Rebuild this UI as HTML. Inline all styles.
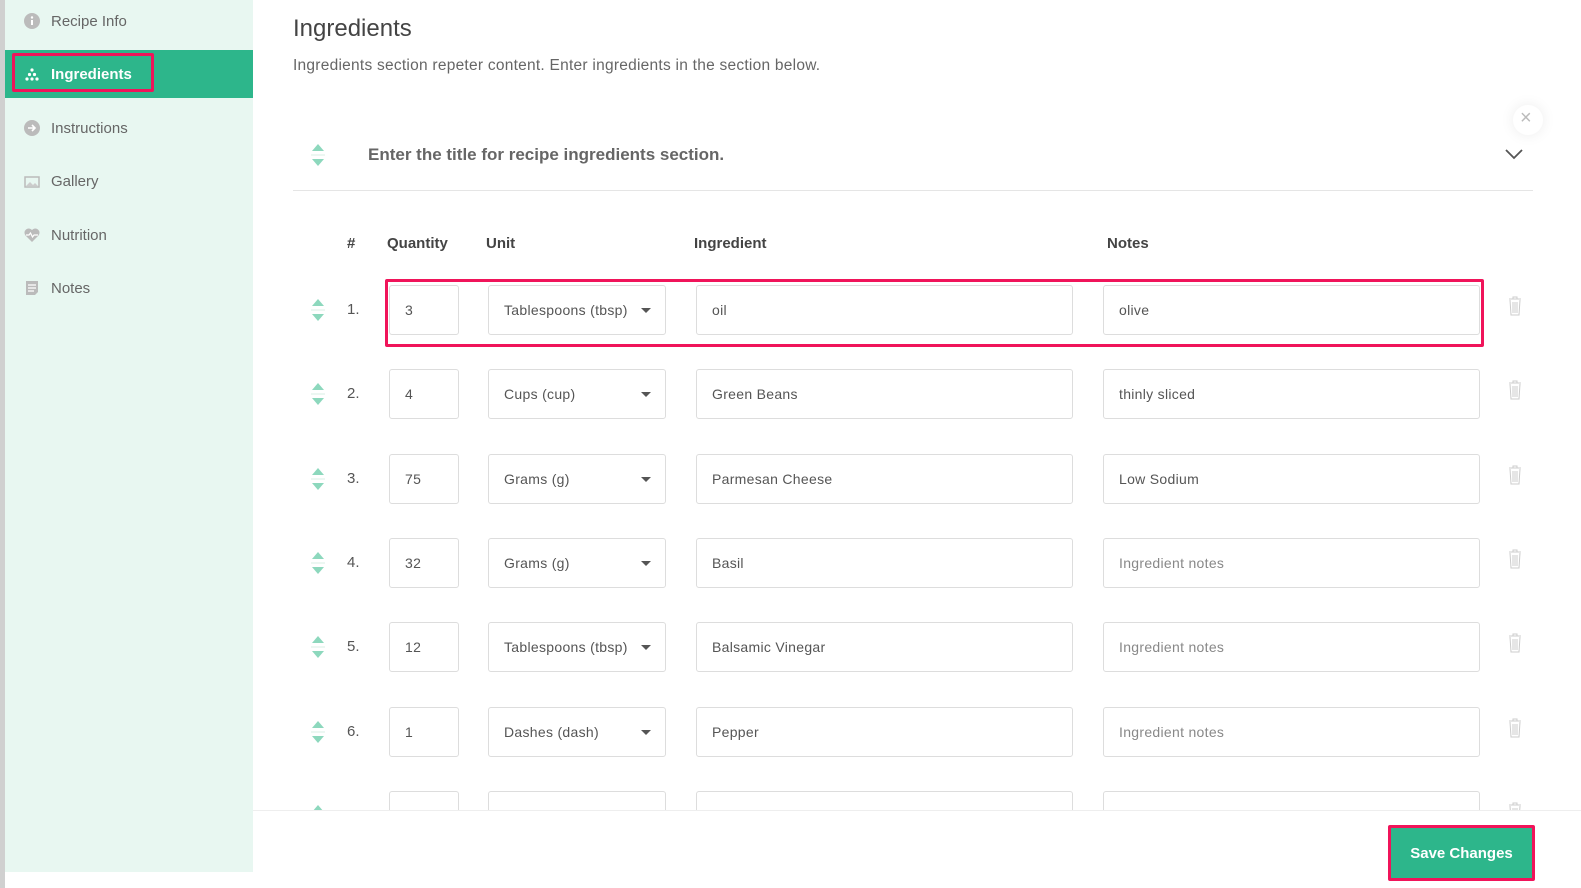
<!DOCTYPE html>
<html><head><meta charset="utf-8"><style>
*{box-sizing:border-box;margin:0;padding:0}
body{width:1581px;height:888px;overflow:hidden;background:#fff;font-family:"Liberation Sans",sans-serif;color:#555;position:relative}
.a{position:absolute}
.strip{left:0;top:0;width:5px;height:888px;background:#d0d0d0}
.side{left:5px;top:0;width:248px;height:872px;background:#e8f7f1}
.item{left:5px;width:248px;height:48px;font-size:15px;color:#666;display:flex;align-items:center;padding-left:46px}
.ic{position:absolute;left:19px;top:16px;width:16px;height:16px}
.act{background:#2db68b;color:#fff;font-weight:bold}
.inp{height:50px;border:1px solid #ddd;border-radius:3px;font-size:14px;color:#555;display:flex;align-items:center;padding-left:15px;letter-spacing:.3px;background:#fff}
.ph{color:#888}
.hd{top:235px;font-size:15px;font-weight:bold;color:#444}
.num{font-size:15px;color:#555;left:347px}
.caret{position:absolute;right:14px;top:22px;width:0;height:0;border-left:5px solid transparent;border-right:5px solid transparent;border-top:5px solid #555}
</style></head><body>
<div class="a strip"></div>
<div class="a side"></div>
<div class="a item" style="top:0;height:42px"><svg class="ic" style="top:13px" viewBox="0 0 16 16"><circle cx="8" cy="8" r="8" fill="#bbb"/><rect x="7" y="7" width="2" height="5" fill="#fff"/><circle cx="8" cy="4.5" r="1.2" fill="#fff"/></svg>Recipe Info</div>
<div class="a item act" style="top:50px"><svg class="ic" viewBox="0 0 16 16" fill="#fff"><circle cx="8" cy="4" r="1.6"/><circle cx="5.5" cy="8.5" r="1.6"/><circle cx="10.5" cy="8.5" r="1.6"/><circle cx="3" cy="13" r="1.6"/><circle cx="8" cy="13" r="1.6"/><circle cx="13" cy="13" r="1.6"/></svg>Ingredients</div>
<div class="a" style="left:12px;top:53px;width:142px;height:39px;border:3px solid #f0145a;border-radius:2px"></div>
<div class="a item" style="top:104px"><svg class="ic" viewBox="0 0 16 16"><circle cx="8" cy="8" r="8" fill="#bbb"/><path d="M4 8h7M8 5l3 3-3 3" stroke="#fff" stroke-width="1.6" fill="none"/></svg>Instructions</div>
<div class="a item" style="top:157px"><svg class="ic" viewBox="0 0 16 16"><rect x="1" y="4" width="14" height="10" fill="none" stroke="#bbb" stroke-width="1.5"/><path d="M2 13l4-4 3 3 2-2 3 3z" fill="#ccc"/></svg>Gallery</div>
<div class="a item" style="top:211px"><svg class="ic" viewBox="0 0 16 16"><path d="M8 15L1.5 8.5A4 4 0 018 3a4 4 0 016.5 5.5z" fill="#bbb"/><path d="M2 8h3l1.5-2 2 4 1.5-2h4" stroke="#fff" stroke-width="1.2" fill="none"/></svg>Nutrition</div>
<div class="a item" style="top:264px"><svg class="ic" viewBox="0 0 16 16"><path d="M2 1h12v11l-3 3H2z" fill="#bbb"/><path d="M4 5h8M4 8h8M4 11h6" stroke="#fff" stroke-width="1.2"/></svg>Notes</div>

<div class="a" style="left:293px;top:15px;font-size:24px;color:#444">Ingredients</div>
<div class="a" style="left:293px;top:57px;font-size:15.5px;color:#666;letter-spacing:.25px">Ingredients section repeter content. Enter ingredients in the section below.</div>

<div class="a" style="left:1513px;top:105px;width:30px;height:30px;border-radius:50%;background:#fff;box-shadow:0 0 14px rgba(0,0,0,.08)"></div>
<div class="a" style="left:1520px;top:107px;font-size:20px;color:#bbb">×</div>

<svg class="a" style="left:311px;top:143px" width="14" height="24"><path d="M7 1l6 7H1z" fill="#8dd8bd"/><path d="M7 23l6-7H1z" fill="#8dd8bd"/><line x1="0" y1="12" x2="14" y2="12" stroke="#d8efe6"/></svg>
<div class="a" style="left:368px;top:145px;font-size:17px;font-weight:bold;color:#666">Enter the title for recipe ingredients section.</div>
<svg class="a" style="left:1505px;top:148px" width="18" height="12"><path d="M1 2l8 8 8-8" stroke="#555" stroke-width="1.8" fill="none"/></svg>
<div class="a" style="left:293px;top:190px;width:1240px;height:1px;background:#e5e5e5"></div>

<div class="a hd" style="left:347px">#</div>
<div class="a hd" style="left:387px">Quantity</div>
<div class="a hd" style="left:486px">Unit</div>
<div class="a hd" style="left:694px">Ingredient</div>
<div class="a hd" style="left:1107px">Notes</div>

<div id="rows"></div>
<script>
var d=[["3","Tablespoons (tbsp)","oil","olive"],["4","Cups (cup)","Green Beans","thinly sliced"],["75","Grams (g)","Parmesan Cheese","Low Sodium"],["32","Grams (g)","Basil",""],["12","Tablespoons (tbsp)","Balsamic Vinegar",""],["1","Dashes (dash)","Pepper",""],["","","",""]];
var h="";
d.forEach(function(r,i){var t=285+i*84.3;
h+='<svg class="a" style="left:311px;top:'+(t+13)+'px" width="14" height="24"><path d="M7 1l6 7H1z" fill="#8dd8bd"/><path d="M7 23l6-7H1z" fill="#8dd8bd"/><line x1="0" y1="12" x2="14" y2="12" stroke="#d8efe6"/></svg>';
if(i<6)h+='<div class="a num" style="top:'+(t+16)+'px">'+(i+1)+'.</div>';
h+='<div class="a inp" style="left:389px;top:'+t+'px;width:70px">'+r[0]+'</div>';
h+='<div class="a inp" style="left:488px;top:'+t+'px;width:178px">'+r[1]+(i<6?'<span class="caret"></span>':'')+'</div>';
h+='<div class="a inp" style="left:696px;top:'+t+'px;width:377px">'+r[2]+'</div>';
h+='<div class="a inp'+(r[3]?'':' ph')+'" style="left:1103px;top:'+t+'px;width:377px">'+(r[3]||(i<6?'Ingredient notes':''))+'</div>';
h+='<svg class="a" style="left:1508px;top:'+(t+11)+'px" width="14" height="20"><path d="M1 3h12M5 3V1h4v2M2 4l1 15h8l1-15M5 6v11M7 6v11M9 6v11" stroke="#ccc" stroke-width="1" fill="none"/></svg>';
});
document.getElementById("rows").innerHTML=h;
</script>
<div class="a" style="left:385px;top:279px;width:1099px;height:68px;border:3px solid #f0145a;border-radius:2px"></div>

<div class="a" style="left:253px;top:810px;width:1328px;height:78px;background:#fff;border-top:1px solid #eee"></div>
<div class="a" style="left:1388px;top:825px;width:147px;height:56px;border:3px solid #f0145a;border-radius:2px;background:#2db68b;color:#fff;font-weight:bold;font-size:15px;display:flex;align-items:center;justify-content:center">Save Changes</div>
</body></html>
